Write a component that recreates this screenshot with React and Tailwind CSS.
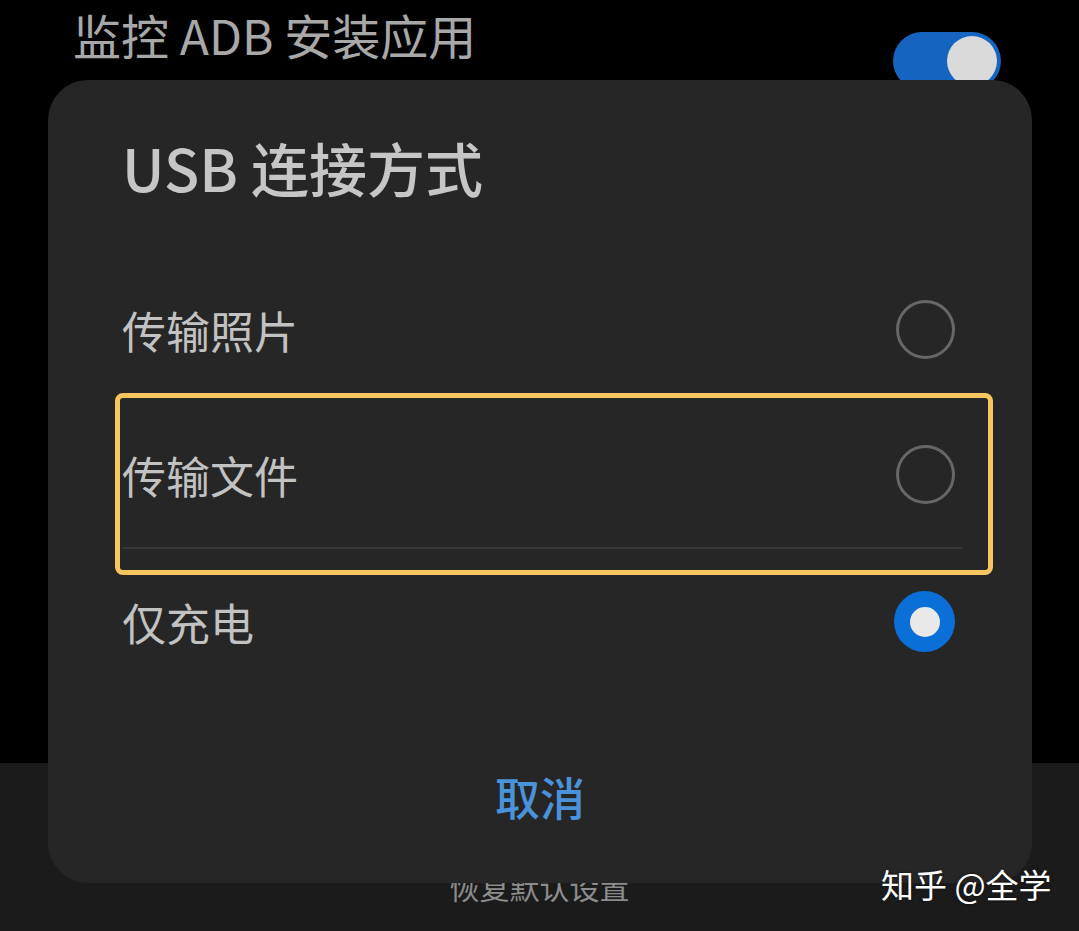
const rows = [
  { label: '传输照片', checked: false },
  { label: '传输文件', checked: false },
  { label: '仅充电', checked: true },
]

function Radio({ checked }) {
  if (checked) {
    return (
      <span className="flex h-[61px] w-[61px] items-center justify-center rounded-full bg-[#0b6fd8]">
        <span className="h-[30px] w-[30px] rounded-full bg-[#e9e9e9]" />
      </span>
    )
  }
  return <span className="h-[59px] w-[59px] rounded-full border-[3px] border-[#676767]" />
}

export default function App() {
  return (
    <div className="relative h-[931px] w-[1079px] overflow-hidden bg-black font-['Noto_Sans_CJK_SC','Noto_Sans',sans-serif]">
      {/* settings page behind the dialog */}
      <div className="flex h-full flex-col">
        <div className="flex items-start pl-[73px] pr-[78px]">
          <span className="mt-[5px] text-[48px] leading-[58px] text-[#a8a8a8]">监控 ADB 安装应用</span>
          <span className="ml-auto mt-[32px] flex h-[58px] w-[108px] items-center justify-end rounded-full bg-[#1565c0] pr-[4px]">
            <span className="h-[50px] w-[50px] rounded-full bg-[#dadada]" />
          </span>
        </div>
        <div className="mt-auto h-[168px] bg-[#1b1b1b] pt-[106px] text-center text-[30px] leading-[34px] text-[#8c8c8c]">
          恢复默认设置
        </div>
      </div>

      {/* dialog */}
      <div className="absolute left-[48px] top-[80px] flex h-[803px] w-[984px] flex-col rounded-[40px] bg-[#262626]">
        <h2 className="pl-[74px] pt-[55px] text-[58px] font-medium leading-[64px] text-[#c6c6c6]">USB 连接方式</h2>
        <div className="mt-[58px]">
          {rows.map((r, i) => (
            <div key={r.label}>
              <div className="flex h-[145px] items-center justify-between pl-[74px] pr-[77px]">
                <span className="text-[44px] leading-[52px] text-[#c2c2c2]">{r.label}</span>
                <Radio checked={r.checked} />
              </div>
              {i === 1 && <div className="ml-[74px] mr-[70px] h-[2px] bg-[#383838]" />}
            </div>
          ))}
        </div>
        <button className="mx-auto mt-[75px] text-[45px] font-medium leading-[56px] text-[#4a92da]">取消</button>
      </div>

      {/* highlight annotation */}
      <div className="absolute left-[115px] top-[393px] h-[182px] w-[878px] rounded-[8px] border-[5px] border-[#f7c65e]" />

      {/* watermark */}
      <div className="absolute left-[881px] top-[864px] text-[33px] leading-[40px] text-white [text-shadow:0_0_3px_rgba(0,0,0,0.6)]">
        知乎 @全学
      </div>
    </div>
  )
}
